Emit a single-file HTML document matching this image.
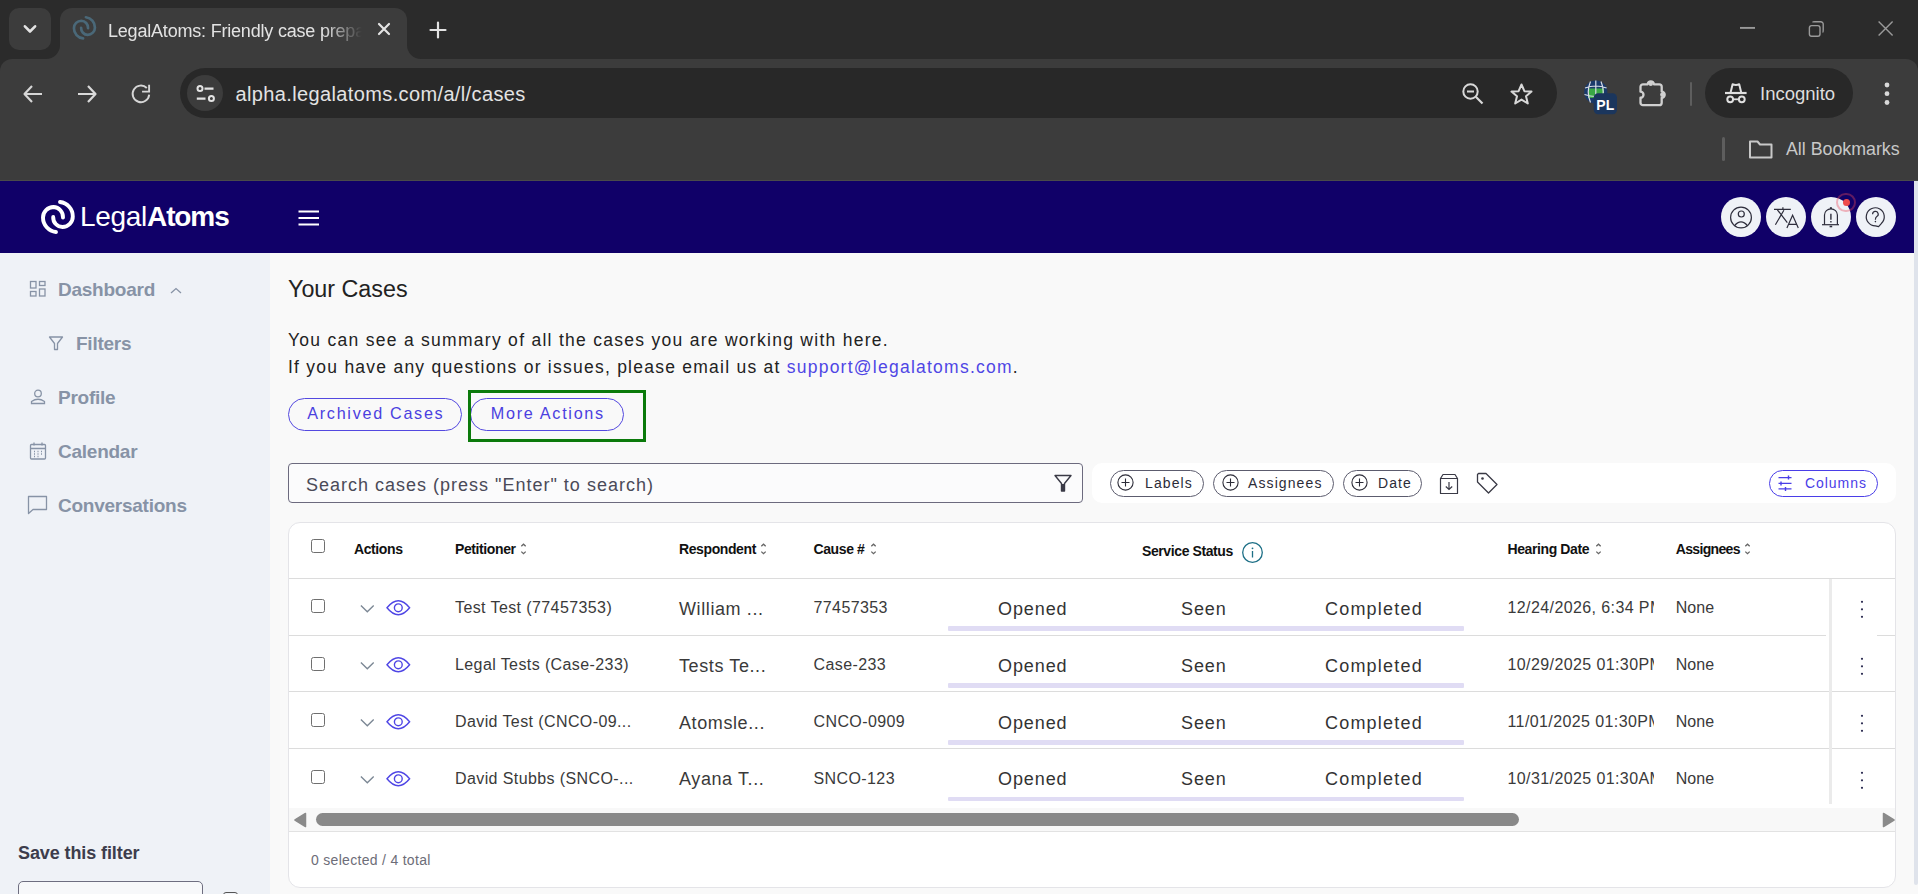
<!DOCTYPE html>
<html><head><meta charset="utf-8">
<style>
*{box-sizing:border-box;margin:0;padding:0}
html,body{width:1918px;height:894px;overflow:hidden;background:#f9f9f9;font-family:"Liberation Sans",sans-serif}
.a{position:absolute}
svg{display:block}
/* chrome */
#frame{left:0;top:0;width:1918px;height:80px;background:#2b2b2b}
#toolbar{left:0;top:59px;width:1918px;height:122px;background:#3c3c3c;border-top-left-radius:12px;border-top-right-radius:12px}
#tabsearch{left:9px;top:8px;width:42px;height:42px;border-radius:10px;background:#3c3c3c}
#tab{left:60px;top:8px;width:347px;height:51px;background:#3c3c3c;border-radius:12px 12px 0 0}
#omni{left:180px;top:68px;width:1377px;height:50px;border-radius:25px;background:#282828}
#incog{left:1705px;top:68px;width:148px;height:50px;border-radius:25px;background:#282828}
.ct{color:#e3e3e3;font-size:16px}
/* app */
#hdr{left:0;top:181px;width:1914px;height:72px;background:#100068}
#side{left:0;top:253px;width:270px;height:641px;background:#eff2f7}
#vscroll{left:1914px;top:181px;width:4px;height:704px;background:#dfe3eb;border-radius:0 0 2px 2px}
.nav{color:#8793a6;font-size:19px;font-weight:bold;letter-spacing:-0.25px}
.ic{stroke:#8793a6;fill:none;stroke-width:1.3}
.hbtn{width:40px;height:40px;border-radius:20px;background:#eff2f7;top:16px}

#content{left:270px;top:253px;width:1644px;height:641px;background:#f9f9f9}
.tx{color:#222;white-space:nowrap}
.pill{border:1.5px solid #5449e0;border-radius:17px;color:#4b3fe0;font-size:16.2px;letter-spacing:1.7px;text-align:center;text-indent:1.7px}
.chip{top:7px;height:27px;border:1.2px solid #5c5c6e;border-radius:14px;font-size:14px;letter-spacing:1.1px;color:#2c2c38}
.hd{font-size:14px;font-weight:bold;letter-spacing:-0.4px;color:#111;white-space:nowrap}
.cell{font-size:16px;letter-spacing:0.4px;color:#3a3a3a;white-space:nowrap}
.big{font-size:18px;letter-spacing:0.6px;color:#3a3a3a;white-space:nowrap}
.st{font-size:18px;letter-spacing:0.9px;color:#333;white-space:nowrap}
.cb{width:14px;height:14px;border:1.3px solid #6f6f6f;border-radius:2.5px;background:#fff}
.sep{height:1px;background:#dcdcdc}
.bar{height:4.5px;background:#e0dcf4;border-radius:1px}
</style></head><body>

<div id="frame" class="a"></div>
<div id="toolbar" class="a"></div>
<div id="tabsearch" class="a"><svg width="42" height="42"><path d="M15.9 18.3 L21 23.5 L26.1 18.3" stroke="#e3e3e3" stroke-width="2.6" fill="none" stroke-linecap="round" stroke-linejoin="round"/></svg></div>
<svg class="a" style="left:46px;top:45px" width="14" height="14.5"><path d="M14 0L14 14.5L0 14.5L0 14A14 14 0 0 0 14 0Z" fill="#3c3c3c"/></svg>
<svg class="a" style="left:407px;top:45px" width="14" height="14.5"><path d="M0 0L0 14.5L14 14.5L14 14A14 14 0 0 1 0 0Z" fill="#3c3c3c"/></svg>
<div id="tab" class="a">
  <svg class="a" style="left:8.6px;top:5.2px" width="31" height="31" viewBox="0 0 44 44"><path d="M27 21.5A9.8 10 0 0 0 17.5 11A10.5 10.5 0 0 0 7 21.5A14.5 14.5 0 0 0 20 36M17.2 21A9.3 9.5 0 0 0 26.5 31A10.4 10.4 0 0 0 36.8 20.5A14.5 14.5 0 0 0 24 6" stroke="#4a6878" stroke-width="3.8" fill="none" stroke-linecap="round"/></svg>
  <div class="a ct" style="left:48px;top:13px;font-size:18px;letter-spacing:-0.2px;white-space:nowrap;width:254px;overflow:hidden;-webkit-mask-image:linear-gradient(90deg,#000 85%,transparent 100%)">LegalAtoms: Friendly case preparation</div>
  <svg class="a" style="left:316px;top:13px" width="16" height="16"><path d="M3 3L13 13M13 3L3 13" stroke="#e3e3e3" stroke-width="2.2" stroke-linecap="round"/></svg>
</div>
<svg class="a" style="left:427.5px;top:19.7px" width="20" height="20"><path d="M10 2.5V17.5M2.5 10H17.5" stroke="#e3e3e3" stroke-width="2.2" stroke-linecap="round"/></svg>
<!-- window controls -->
<svg class="a" style="left:1738px;top:18px" width="20" height="20"><path d="M2 9.9H17" stroke="#9a9a9a" stroke-width="1.9"/></svg>
<svg class="a" style="left:1806px;top:18px" width="22" height="22"><rect x="3.4" y="7.6" width="10.6" height="10.6" rx="2.2" stroke="#9a9a9a" stroke-width="1.4" fill="none"/><path d="M6.6 4.4Q6.8 3.7 8.8 3.7H14.8A2.4 2.4 0 0 1 17.2 6.1V12Q17.2 14.3 16.6 14.5" stroke="#9a9a9a" stroke-width="1.4" fill="none"/></svg>
<svg class="a" style="left:1874px;top:17px" width="24" height="24"><path d="M4.6 4.6L18.6 18.6M18.6 4.6L4.6 18.6" stroke="#9a9a9a" stroke-width="1.4"/></svg>
<!-- nav -->
<svg class="a" style="left:21px;top:82px" width="24" height="24"><path d="M21 12H4M11 4L3.5 12L11 20" stroke="#d6d6d6" stroke-width="2.1" fill="none" stroke-linejoin="round"/></svg>
<svg class="a" style="left:75px;top:82px" width="24" height="24"><path d="M3 12H20M13 4L20.5 12L13 20" stroke="#d9d9d9" stroke-width="2.2" fill="none" stroke-linejoin="round"/></svg>
<svg class="a" style="left:129px;top:82px" width="24" height="24"><path d="M20.2 12.6A8.3 8.3 0 1 1 17.8 6.0" stroke="#d6d6d6" stroke-width="1.9" fill="none"/><path d="M20.1 3.6V9.6H14" stroke="#d6d6d6" stroke-width="1.9" fill="none" stroke-linecap="square"/></svg>
<div id="omni" class="a">
  <div class="a" style="left:7px;top:7px;width:36px;height:36px;border-radius:18px;background:#3c3c3c"></div>
  <svg class="a" style="left:13px;top:13px" width="24" height="24"><circle cx="7" cy="7.6" r="2.5" stroke="#e3e3e3" stroke-width="2" fill="none"/><path d="M11.5 7.6H20.5M3.8 17.6H12.5" stroke="#e3e3e3" stroke-width="2.1"/><circle cx="18.4" cy="17.6" r="2.5" stroke="#e3e3e3" stroke-width="2" fill="none"/></svg>
  <div class="a ct" style="left:55.5px;top:14.5px;font-size:20px;letter-spacing:0.37px;white-space:nowrap">alpha.legalatoms.com/a/l/cases</div>
  <svg class="a" style="left:1281px;top:14px" width="24" height="24"><circle cx="9.5" cy="9.5" r="7.2" stroke="#d8d8d8" stroke-width="2" fill="none"/><path d="M6 9.5H13M14.8 14.8L21.5 21.5" stroke="#d8d8d8" stroke-width="2.2"/></svg>
  <svg class="a" style="left:1328.5px;top:13.5px" width="25" height="25"><path d="M12.5 2.5L15.4 9.2L22.5 9.6L17 14.3L18.8 21.5L12.5 17.6L6.2 21.5L8 14.3L2.5 9.6L9.6 9.2Z" stroke="#d8d8d8" stroke-width="2" fill="none" stroke-linejoin="round"/></svg>
</div>
<!-- extension -->
<svg class="a" style="left:1583px;top:80px" width="38" height="36"><circle cx="12.8" cy="12" r="11.6" fill="#1b3a6b"/><path d="M5 8.5H21V18H5Z" fill="#3aa845"/><path d="M2 8Q12.8 4 23.6 8M1.5 14.5Q12.8 18.5 24 14.5M12.8 0.5V23.5M7.5 1.5Q3 12 7.5 22.5M18 1.5Q22.5 12 18 22.5" stroke="#d8dde6" stroke-width="1.2" fill="none"/><rect x="10.7" y="13.3" width="23.3" height="21" rx="4.5" fill="#1b365d"/><text x="22.3" y="30" font-family="Liberation Sans" font-weight="bold" font-size="14" fill="#fff" text-anchor="middle">PL</text></svg>
<svg class="a" style="left:1638px;top:79px" width="30" height="30"><path d="M5 5.3H9.8A3 3 0 0 1 15.8 5.3H21.2A2.5 2.5 0 0 1 23.7 7.8V12.7A3 3 0 0 1 23.7 18.7V23.7A2.5 2.5 0 0 1 21.2 26.2H5A2.5 2.5 0 0 1 2.5 23.7V18.7A3 3 0 0 0 2.5 12.7V7.8A2.5 2.5 0 0 1 5 5.3Z" stroke="#d0d0d0" stroke-width="2.3" fill="none" stroke-linejoin="round"/><circle cx="12.8" cy="4.8" r="2.2" fill="#d0d0d0"/><circle cx="24.3" cy="15.7" r="2.2" fill="#d0d0d0"/></svg>
<div class="a" style="left:1690px;top:82px;width:2px;height:24px;background:#5e5e5e;border-radius:1px"></div>
<div id="incog" class="a">
  <svg class="a" style="left:19px;top:14px" width="26" height="24"><path d="M6.6 10.5L8.6 2.3Q12 3.6 15.2 2.3L17.2 10.5" stroke="#e0e0e0" stroke-width="2" fill="none" stroke-linejoin="round"/><path d="M1 11H22.6" stroke="#e0e0e0" stroke-width="2.2"/><circle cx="6.2" cy="17.3" r="2.9" stroke="#e0e0e0" stroke-width="2" fill="none"/><circle cx="17.8" cy="17.3" r="2.9" stroke="#e0e0e0" stroke-width="2" fill="none"/><path d="M9 17.3H15" stroke="#e0e0e0" stroke-width="1.8"/></svg>
  <div class="a ct" style="left:55px;top:14.5px;font-size:18.5px;white-space:nowrap;color:#dedede">Incognito</div>
</div>
<svg class="a" style="left:1879px;top:80px" width="16" height="28"><circle cx="8" cy="5" r="2.4" fill="#d9d9d9"/><circle cx="8" cy="13.7" r="2.4" fill="#d9d9d9"/><circle cx="8" cy="22.5" r="2.4" fill="#d9d9d9"/></svg>
<!-- bookmarks -->
<div class="a" style="left:1722px;top:137px;width:2.5px;height:24px;background:#5e5e5e;border-radius:1.5px"></div>
<svg class="a" style="left:1747px;top:137px" width="28" height="24"><path d="M3 4.5H10.5L13 7.5H24.5V20.5H3Z" stroke="#c8c8c8" stroke-width="2" fill="none" stroke-linejoin="round"/></svg>
<div class="a" style="left:1786px;top:139px;font-size:17.8px;color:#c8c8c8;white-space:nowrap">All Bookmarks</div>

<div class="a" style="left:0;top:180px;width:1918px;height:1px;background:#4a4a4a"></div>
<div id="hdr" class="a">
  <svg class="a" style="left:36px;top:15px" width="44" height="44" viewBox="0 0 44 44"><path d="M27 21.5A9.8 10 0 0 0 17.5 11A10.5 10.5 0 0 0 7 21.5A14.5 14.5 0 0 0 20 36M17.2 21A9.3 9.5 0 0 0 26.5 31A10.4 10.4 0 0 0 36.8 20.5A14.5 14.5 0 0 0 24 6" stroke="#fff" stroke-width="3.9" fill="none" stroke-linecap="round"/></svg>
  <div class="a" style="left:80px;top:19.8px;color:#fff;font-size:28px;white-space:nowrap;letter-spacing:-0.3px">Legal<b style="letter-spacing:-1.1px">Atoms</b></div>
  <svg class="a" style="left:298px;top:29px" width="22" height="16"><path d="M0.5 1.5H21M0.5 8H21M0.5 14.5H21" stroke="#fff" stroke-width="1.9"/></svg>
  <div class="a hbtn" style="left:1721px"><svg width="40" height="40"><circle cx="20" cy="20.5" r="10.4" stroke="#2e2e3c" stroke-width="1.2" fill="none"/><circle cx="20.3" cy="17" r="3" stroke="#2e2e3c" stroke-width="1.2" fill="none"/><path d="M13.3 28.8Q20 20.8 26.7 28.8" stroke="#2e2e3c" stroke-width="1.2" fill="none"/></svg></div>
  <div class="a hbtn" style="left:1766px"><svg width="40" height="40"><path d="M8 12.3H24.8M16.9 10.3V12.3M11.4 12.8L21.3 25.7M17.9 13.3L9.4 27.7" stroke="#2e2e3c" stroke-width="1.2" fill="none"/><path d="M20.9 31L26.6 18.3L32.3 31M22.6 27.3H30.6" stroke="#2e2e3c" stroke-width="1.2" fill="none"/></svg></div>
  <div class="a hbtn" style="left:1811px"><svg width="40" height="40"><path d="M13.5 27.7V18A6.45 6.2 0 0 1 26.4 18V27.7" stroke="#2e2e3c" stroke-width="1.2" fill="none"/><path d="M19.9 10.2V12" stroke="#2e2e3c" stroke-width="2"/><path d="M11 27.7H28" stroke="#2e2e3c" stroke-width="1.2"/><path d="M18.6 29.5H21.2" stroke="#2e2e3c" stroke-width="1.6"/><path d="M19.9 16.8V22.7M19.9 24V25.4" stroke="#2e2e3c" stroke-width="1.4"/></svg></div>
  <div class="a hbtn" style="left:1856px"><svg width="40" height="40"><path d="M19.5 28.8A9 9 0 1 1 25.5 26.3L22.6 29.6Z" stroke="#2e2e3c" stroke-width="1.2" fill="none" stroke-linejoin="round"/><path d="M16.6 17.3A2.8 2.8 0 1 1 20.8 19.6C19.4 20.5 19.4 21.3 19.4 22.8" stroke="#2e2e3c" stroke-width="1.2" fill="none"/><circle cx="19.4" cy="24.6" r="0.8" fill="#2e2e3c"/></svg></div>
  <div class="a" style="left:1836.4px;top:11.5px;width:19.8px;height:19.8px;border-radius:10px;border:2.3px solid rgba(235,70,90,0.38)"></div>
  <div class="a" style="left:1842.8px;top:17.9px;width:7px;height:7px;border-radius:4px;background:#ee4c4c"></div>
</div>
<div id="side" class="a">
  <svg class="a" style="left:29px;top:27px" width="18" height="18"><rect x="1.5" y="1.5" width="5.5" height="6.5" stroke="#8793a6" stroke-width="1.3" fill="none"/><rect x="10.5" y="1.5" width="5.5" height="4" stroke="#8793a6" stroke-width="1.3" fill="none"/><rect x="1.5" y="11.5" width="5.5" height="4.5" stroke="#8793a6" stroke-width="1.3" fill="none"/><rect x="10.5" y="9" width="5.5" height="7" stroke="#8793a6" stroke-width="1.3" fill="none"/></svg>
  <div class="a nav" style="left:58px;top:25.8px">Dashboard</div>
  <svg class="a" style="left:169px;top:32.5px" width="14" height="10"><path d="M2 7L7 2.5L12 7" stroke="#8793a6" stroke-width="1.3" fill="none"/></svg>
  <svg class="a" style="left:48px;top:82px" width="16" height="16"><path d="M1.5 2H14.5L9.5 8.5V14.5H6.5V8.5Z" stroke="#8793a6" stroke-width="1.3" fill="none" stroke-linejoin="round"/></svg>
  <div class="a nav" style="left:76px;top:79.8px">Filters</div>
  <svg class="a" style="left:29px;top:135px" width="18" height="18"><circle cx="9" cy="5.5" r="3.3" stroke="#8793a6" stroke-width="1.3" fill="none"/><path d="M2.5 15.5V13.5Q9 9 15.5 13.5V15.5Z" stroke="#8793a6" stroke-width="1.3" fill="none"/></svg>
  <div class="a nav" style="left:58px;top:133.8px">Profile</div>
  <svg class="a" style="left:29px;top:188px" width="18" height="20"><rect x="1.5" y="3.5" width="15" height="14.5" rx="1" stroke="#8793a6" stroke-width="1.3" fill="none"/><path d="M1.5 7.5H16.5M5 1.5V4.5M13 1.5V4.5" stroke="#8793a6" stroke-width="1.3"/><path d="M5 10.5H6M8.5 10.5H9.5M12 10.5H13M5 13H6M8.5 13H9.5M12 13H13M5 15.5H6M8.5 15.5H9.5" stroke="#8793a6" stroke-width="1.4"/></svg>
  <div class="a nav" style="left:58px;top:187.8px">Calendar</div>
  <svg class="a" style="left:27px;top:242px" width="22" height="20"><path d="M1.5 1.5H19.5V14.5H6L1.5 18.5Z" stroke="#8793a6" stroke-width="1.3" fill="none" stroke-linejoin="round"/></svg>
  <div class="a nav" style="left:58px;top:241.8px">Conversations</div>
  <div class="a" style="left:18px;top:590px;font-size:18px;font-weight:bold;color:#3d3d4c;letter-spacing:-0.1px">Save this filter</div>
  <div class="a" style="left:18px;top:628px;width:185px;height:30px;border:1.2px solid #6e6e80;border-radius:5px;background:#f7f8fa"></div>
  <div class="a" style="left:222.5px;top:639px;width:15.5px;height:16px;border:1.5px solid #555;border-radius:3px"></div>
</div>
<div id="content" class="a">
  <div class="a tx" style="left:18px;top:22.7px;font-size:23.3px">Your Cases</div>
  <div class="a tx" style="left:18px;top:76.6px;font-size:17.5px;letter-spacing:1.28px">You can see a summary of all the cases you are working with here.</div>
  <div class="a tx" style="left:18px;top:103.8px;font-size:17.5px;letter-spacing:1.245px">If you have any questions or issues, please email us at <span style="color:#4f46e5">support@legalatoms.com</span>.</div>
  <div class="a pill" style="left:18px;top:145px;width:174px;height:33px;line-height:29px">Archived Cases</div>
  <div class="a pill" style="left:200px;top:145px;width:154px;height:33px;line-height:29px">More Actions</div>
  <div class="a" style="left:198px;top:137px;width:178px;height:52px;border:3px solid #0b7a0b"></div>
  <!-- search -->
  <div class="a" style="left:18px;top:210px;width:795px;height:40px;border:1.3px solid #6c6a7e;border-radius:4px;background:#fbfbfc"></div>
  <div class="a tx" style="left:36px;top:222.2px;font-size:18px;letter-spacing:1px;color:#4a4a58">Search cases (press "Enter" to search)</div>
  <svg class="a" style="left:783px;top:220px" width="20" height="20"><path d="M2 2.5H18L11.5 10.5V18H8.5V10.5Z" stroke="#3a3a46" stroke-width="1.4" fill="none" stroke-linejoin="round"/><path d="M10 11V18" stroke="#3a3a46" stroke-width="2.6"/></svg>
  <!-- filter strip -->
  <div class="a" style="left:822px;top:210px;width:804px;height:40px;border-radius:10px;background:#fff">
    <div class="a chip" style="left:18px;width:94px"><svg class="a" style="left:6px;top:2.8px" width="17" height="17"><circle cx="8.5" cy="8.5" r="7.6" stroke="#2c2c38" stroke-width="1.1" fill="none"/><path d="M8.5 4.5V12.5M4.5 8.5H12.5" stroke="#2c2c38" stroke-width="1.1"/></svg><span class="a" style="left:34px;top:4px">Labels</span></div>
    <div class="a chip" style="left:121px;width:121px"><svg class="a" style="left:8px;top:2.8px" width="17" height="17"><circle cx="8.5" cy="8.5" r="7.6" stroke="#2c2c38" stroke-width="1.1" fill="none"/><path d="M8.5 4.5V12.5M4.5 8.5H12.5" stroke="#2c2c38" stroke-width="1.1"/></svg><span class="a" style="left:34px;top:4px">Assignees</span></div>
    <div class="a chip" style="left:251px;width:79px"><svg class="a" style="left:6.5px;top:2.8px" width="17" height="17"><circle cx="8.5" cy="8.5" r="7.6" stroke="#2c2c38" stroke-width="1.1" fill="none"/><path d="M8.5 4.5V12.5M4.5 8.5H12.5" stroke="#2c2c38" stroke-width="1.1"/></svg><span class="a" style="left:34px;top:4px">Date</span></div>
    <svg class="a" style="left:346px;top:10px" width="22" height="22"><path d="M2.5 5.5L5 1.5H17L19.5 5.5V20.5H2.5Z" stroke="#3a3a46" stroke-width="1.2" fill="none" stroke-linejoin="round"/><path d="M2.5 5.5H19.5M11 9V16.5M7.8 13.5L11 16.5L14.2 13.5" stroke="#3a3a46" stroke-width="1.2" fill="none"/></svg>
    <svg class="a" style="left:383px;top:8px" width="25" height="25"><path d="M2.5 3.5V11L13.5 22L22 13.5L11 2.5H3.5Z" stroke="#3a3a46" stroke-width="1.3" fill="none" stroke-linejoin="round"/><circle cx="7.5" cy="7.5" r="1.3" fill="#3a3a46"/></svg>
    <div class="a" style="left:677px;top:7px;width:109px;height:27px;border:1.3px solid #4a3ee8;border-radius:14px;color:#4a3ee8;font-size:14px;letter-spacing:0.95px"><svg class="a" style="left:7px;top:4px" width="17" height="17"><path d="M1.5 2.7H14.5M1.5 8.3H14.5M1.5 13.8H14.5" stroke="#4a3ee8" stroke-width="1.2"/><path d="M11.5 0.5V4.5M4 6.5V10.5M8.5 12V16" stroke="#4a3ee8" stroke-width="1.4"/></svg><span class="a" style="left:35px;top:4px">Columns</span></div>
  </div>
  <!-- table card -->
  <div id="card" class="a" style="left:18px;top:269px;width:1608px;height:366px;background:#fff;border:1px solid #e4e4e8;border-radius:12px;overflow:hidden">
    <div class="a cb" style="left:22px;top:15.5px"></div>
    <div class="a hd" style="left:65px;top:18px">Actions</div>
    <div class="a hd" style="left:166px;top:18px">Petitioner</div><svg class="a" style="left:231px;top:18.8px" width="7" height="13"><path d="M1.3 4.3L3.5 2.2L5.7 4.3M1.3 9.6L3.5 11.7L5.7 9.6" stroke="#666" stroke-width="1.3" fill="none"/></svg>
    <div class="a hd" style="left:390px;top:18px">Respondent</div><svg class="a" style="left:471px;top:18.8px" width="7" height="13"><path d="M1.3 4.3L3.5 2.2L5.7 4.3M1.3 9.6L3.5 11.7L5.7 9.6" stroke="#666" stroke-width="1.3" fill="none"/></svg>
    <div class="a hd" style="left:524.5px;top:18px">Cause #</div><svg class="a" style="left:581px;top:18.8px" width="7" height="13"><path d="M1.3 4.3L3.5 2.2L5.7 4.3M1.3 9.6L3.5 11.7L5.7 9.6" stroke="#666" stroke-width="1.3" fill="none"/></svg>
    <div class="a hd" style="left:853px;top:20px">Service Status</div>
    <svg class="a" style="left:952px;top:18px" width="23" height="23"><circle cx="11.5" cy="11.5" r="9.8" stroke="#1d6f86" stroke-width="1.3" fill="none"/><path d="M11.5 10V16.5" stroke="#1d6f86" stroke-width="1.3"/><circle cx="11.5" cy="7.3" r="0.9" fill="#1d6f86"/></svg>
    <div class="a hd" style="left:1218.5px;top:18px">Hearing Date</div><svg class="a" style="left:1306px;top:18.8px" width="7" height="13"><path d="M1.3 4.3L3.5 2.2L5.7 4.3M1.3 9.6L3.5 11.7L5.7 9.6" stroke="#666" stroke-width="1.3" fill="none"/></svg>
    <div class="a hd" style="left:1386.7px;top:18px;letter-spacing:-0.65px">Assignees</div><svg class="a" style="left:1455px;top:18.8px" width="7" height="13"><path d="M1.3 4.3L3.5 2.2L5.7 4.3M1.3 9.6L3.5 11.7L5.7 9.6" stroke="#666" stroke-width="1.3" fill="none"/></svg>
    <div class="a sep" style="left:0;top:55px;width:1607px"></div>
    <div class="a cb" style="left:22px;top:76.3px"></div>
    <svg class="a" style="left:70px;top:79.0px" width="16" height="12"><path d="M1.9 3.5L8.3 9.8L14.7 3.5" stroke="#7b8794" stroke-width="1.35" fill="none"/></svg>
    <svg class="a" style="left:96px;top:75.0px" width="26" height="20"><path d="M2 9.8Q13.3 -4.2 24.6 9.8Q13.3 23.8 2 9.8Z" stroke="#4f46e5" stroke-width="1.4" fill="none"/><circle cx="13.3" cy="9.8" r="3.9" stroke="#4f46e5" stroke-width="1.4" fill="none"/></svg>
    <div class="a cell" style="left:166px;top:76.0px">Test Test (77457353)</div>
    <div class="a big" style="left:390px;top:75.5px">William ...</div>
    <div class="a cell" style="left:524.5px;top:76.0px">77457353</div>
    <div class="a st" style="left:709px;top:75.5px">Opened</div>
    <div class="a st" style="left:892px;top:75.5px">Seen</div>
    <div class="a st" style="left:1036px;letter-spacing:1.2px;top:75.5px">Completed</div>
    <div class="a bar" style="left:659px;top:103.0px;width:516px"></div>
    <div class="a cell" style="left:1218.5px;top:76.0px;width:146px;overflow:hidden">12/24/2026, 6:34 PM</div>
    <div class="a cell" style="left:1386.7px;top:76.0px;letter-spacing:0.1px">None</div>
    <div class="a sep" style="left:0;top:112.0px;width:1537px"></div>
    <div class="a sep" style="left:1588px;top:112.0px;width:19px"></div>
    <svg class="a" style="left:1570px;top:76.0px" width="6" height="20"><circle cx="3" cy="2.8" r="1.1" fill="#2a2a50"/><circle cx="3" cy="10.3" r="1.1" fill="#2a2a50"/><circle cx="3" cy="17.8" r="1.1" fill="#2a2a50"/></svg>
    <div class="a cb" style="left:22px;top:133.7px"></div>
    <svg class="a" style="left:70px;top:136.4px" width="16" height="12"><path d="M1.9 3.5L8.3 9.8L14.7 3.5" stroke="#7b8794" stroke-width="1.35" fill="none"/></svg>
    <svg class="a" style="left:96px;top:132.4px" width="26" height="20"><path d="M2 9.8Q13.3 -4.2 24.6 9.8Q13.3 23.8 2 9.8Z" stroke="#4f46e5" stroke-width="1.4" fill="none"/><circle cx="13.3" cy="9.8" r="3.9" stroke="#4f46e5" stroke-width="1.4" fill="none"/></svg>
    <div class="a cell" style="left:166px;top:133.4px">Legal Tests (Case-233)</div>
    <div class="a big" style="left:390px;top:132.9px">Tests Te...</div>
    <div class="a cell" style="left:524.5px;top:133.4px">Case-233</div>
    <div class="a st" style="left:709px;top:132.9px">Opened</div>
    <div class="a st" style="left:892px;top:132.9px">Seen</div>
    <div class="a st" style="left:1036px;letter-spacing:1.2px;top:132.9px">Completed</div>
    <div class="a bar" style="left:659px;top:160.4px;width:516px"></div>
    <div class="a cell" style="left:1218.5px;top:133.4px;width:146px;overflow:hidden">10/29/2025 01:30PM</div>
    <div class="a cell" style="left:1386.7px;top:133.4px;letter-spacing:0.1px">None</div>
    <div class="a sep" style="left:0;top:168px;width:1607px"></div>
    <svg class="a" style="left:1570px;top:133.4px" width="6" height="20"><circle cx="3" cy="2.8" r="1.1" fill="#2a2a50"/><circle cx="3" cy="10.3" r="1.1" fill="#2a2a50"/><circle cx="3" cy="17.8" r="1.1" fill="#2a2a50"/></svg>
    <div class="a cb" style="left:22px;top:190.3px"></div>
    <svg class="a" style="left:70px;top:193.0px" width="16" height="12"><path d="M1.9 3.5L8.3 9.8L14.7 3.5" stroke="#7b8794" stroke-width="1.35" fill="none"/></svg>
    <svg class="a" style="left:96px;top:189.0px" width="26" height="20"><path d="M2 9.8Q13.3 -4.2 24.6 9.8Q13.3 23.8 2 9.8Z" stroke="#4f46e5" stroke-width="1.4" fill="none"/><circle cx="13.3" cy="9.8" r="3.9" stroke="#4f46e5" stroke-width="1.4" fill="none"/></svg>
    <div class="a cell" style="left:166px;top:190.0px">David Test (CNCO-09...</div>
    <div class="a big" style="left:390px;top:189.5px">Atomsle...</div>
    <div class="a cell" style="left:524.5px;top:190.0px">CNCO-0909</div>
    <div class="a st" style="left:709px;top:189.5px">Opened</div>
    <div class="a st" style="left:892px;top:189.5px">Seen</div>
    <div class="a st" style="left:1036px;letter-spacing:1.2px;top:189.5px">Completed</div>
    <div class="a bar" style="left:659px;top:217.0px;width:516px"></div>
    <div class="a cell" style="left:1218.5px;top:190.0px;width:146px;overflow:hidden">11/01/2025 01:30PM</div>
    <div class="a cell" style="left:1386.7px;top:190.0px;letter-spacing:0.1px">None</div>
    <div class="a sep" style="left:0;top:225px;width:1607px"></div>
    <svg class="a" style="left:1570px;top:190.0px" width="6" height="20"><circle cx="3" cy="2.8" r="1.1" fill="#2a2a50"/><circle cx="3" cy="10.3" r="1.1" fill="#2a2a50"/><circle cx="3" cy="17.8" r="1.1" fill="#2a2a50"/></svg>
    <div class="a cb" style="left:22px;top:247.0px"></div>
    <svg class="a" style="left:70px;top:249.7px" width="16" height="12"><path d="M1.9 3.5L8.3 9.8L14.7 3.5" stroke="#7b8794" stroke-width="1.35" fill="none"/></svg>
    <svg class="a" style="left:96px;top:245.7px" width="26" height="20"><path d="M2 9.8Q13.3 -4.2 24.6 9.8Q13.3 23.8 2 9.8Z" stroke="#4f46e5" stroke-width="1.4" fill="none"/><circle cx="13.3" cy="9.8" r="3.9" stroke="#4f46e5" stroke-width="1.4" fill="none"/></svg>
    <div class="a cell" style="left:166px;top:246.7px">David Stubbs (SNCO-...</div>
    <div class="a big" style="left:390px;top:246.2px">Ayana T...</div>
    <div class="a cell" style="left:524.5px;top:246.7px">SNCO-123</div>
    <div class="a st" style="left:709px;top:246.2px">Opened</div>
    <div class="a st" style="left:892px;top:246.2px">Seen</div>
    <div class="a st" style="left:1036px;letter-spacing:1.2px;top:246.2px">Completed</div>
    <div class="a bar" style="left:659px;top:273.7px;width:516px"></div>
    <div class="a cell" style="left:1218.5px;top:246.7px;width:146px;overflow:hidden">10/31/2025 01:30AM</div>
    <div class="a cell" style="left:1386.7px;top:246.7px;letter-spacing:0.1px">None</div>
    <svg class="a" style="left:1570px;top:246.7px" width="6" height="20"><circle cx="3" cy="2.8" r="1.1" fill="#2a2a50"/><circle cx="3" cy="10.3" r="1.1" fill="#2a2a50"/><circle cx="3" cy="17.8" r="1.1" fill="#2a2a50"/></svg>
    <div class="a" style="left:1539.5px;top:56px;width:3px;height:225px;background:#ebebeb"></div>
    <div class="a" style="left:0;top:285px;width:1607px;height:23px;background:#f8f8f8"></div>
    <svg class="a" style="left:5px;top:289px" width="14" height="16"><path d="M11.5 1.5L1 8L11.5 14.5Z" fill="#8a8a8a" stroke="#8a8a8a" stroke-width="1.5" stroke-linejoin="round"/></svg>
    <div class="a" style="left:26.5px;top:289.5px;width:1203px;height:13.5px;border-radius:7px;background:#898989"></div>
    <svg class="a" style="left:1592px;top:289px" width="14" height="16"><path d="M2.5 1.5L13 8L2.5 14.5Z" fill="#8a8a8a" stroke="#8a8a8a" stroke-width="1.5" stroke-linejoin="round"/></svg>
    <div class="a sep" style="left:0;top:308px;width:1607px;background:#e2e2e2"></div>
    <div class="a" style="left:22px;top:329px;font-size:14px;letter-spacing:0.3px;color:#6d6d78;white-space:nowrap">0 selected / 4 total</div>
  </div>
</div>
<div id="vscroll" class="a"></div>
</body></html>
